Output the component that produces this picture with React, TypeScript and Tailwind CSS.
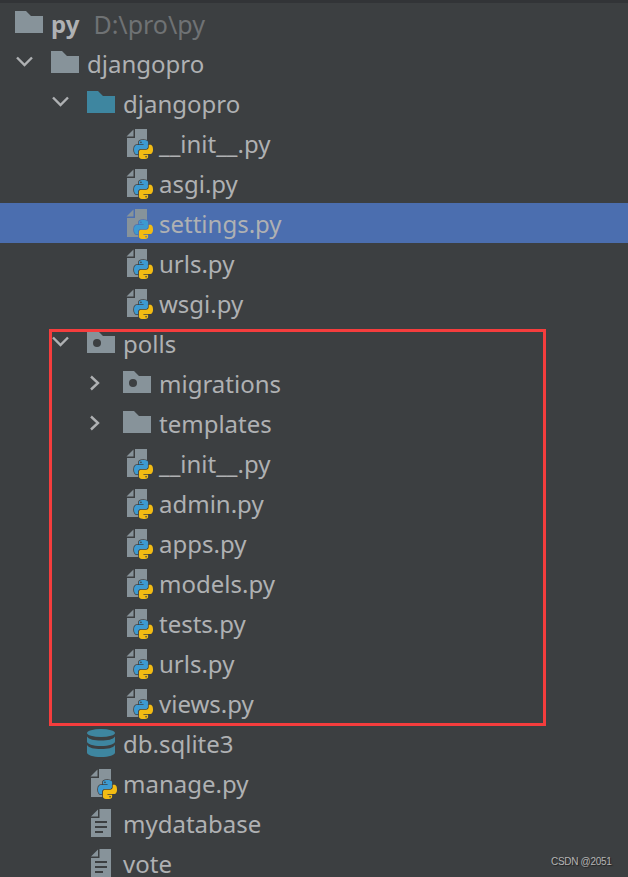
import React from "react";

const BLUE = "M54.9 0C26.8 0 28.5 12.2 28.5 12.2l.03 12.64h26.83v3.8H17.87S0 26.6 0 54.9c0 28.3 15.6 27.3 15.6 27.3h9.3V69.1s-.5-15.6 15.35-15.6h26.46s14.86.24 14.86-14.36V14.9S84.2 0 54.9 0zM40.2 8.5a4.8 4.8 0 1 1 0 9.6 4.8 4.8 0 0 1 0-9.6z";

function Chevron({ open }: { open: boolean }) {
  return (
    <svg width="36" height="40" viewBox="0 0 36 40" className="shrink-0">
      {open ? (
        <path d="M2 14.5l7.5 7.5 7.5-7.5" fill="none" stroke="#afb1b3" strokeWidth="2.4" />
      ) : (
        <path d="M4 13.5l7 6.5-7 6.5" fill="none" stroke="#afb1b3" strokeWidth="2.4" />
      )}
    </svg>
  );
}

function Folder({ color = "#87939a", dot = false, halo = "#3c3f41" }: { color?: string; dot?: boolean; halo?: string }) {
  return (
    <svg width="36" height="40" viewBox="0 0 36 40" className="shrink-0">
      <path d="M0 8h11l5 5h12v17H0z" fill={color} />
      {dot && <circle cx="10" cy="20" r="4" fill={halo} />}
    </svg>
  );
}

function PyFile({ halo = "#3c3f41" }: { halo?: string }) {
  return (
    <svg width="36" height="40" viewBox="0 0 36 40" className="shrink-0">
      <path d="M3.5 13.5l7-7v7z" fill="#87939a" />
      <path d="M12 6h12v28H4V15h8z" fill="#87939a" />
      <g transform="translate(11 17) scale(0.173)" stroke={halo} strokeWidth="9" style={{ paintOrder: "stroke" }}>
        <path d={BLUE} fill="#3d9ad1" fillRule="evenodd" />
        <path d={BLUE} fill="#f2bb13" fillRule="evenodd" transform="rotate(180 55 55)" />
      </g>
    </svg>
  );
}

function TextFile() {
  return (
    <svg width="36" height="40" viewBox="0 0 36 40" className="shrink-0">
      <path d="M4 13.5l7-7v7z" fill="#87939a" />
      <path d="M12.500 6H24v28H4V15h8.500z" fill="#87939a" />
      <path d="M8 18h12v2H8zM8 23h12v2H8zM8 28h8v2H8z" fill="#3c3f41" />
    </svg>
  );
}

function Database() {
  return (
    <svg width="36" height="40" viewBox="0 0 36 40" className="shrink-0">
      <ellipse cx="14" cy="10" rx="14" ry="4" fill="#3e86a0" />
      <path d="M0 13.500c2 3 7 4 14 4s12-1 14-4v5c0 2.500-6 4.500-14 4.500S0 21 0 18.500z" fill="#3e86a0" />
      <path d="M0 22c2 3 7 4 14 4s12-1 14-4v7.500c0 2.500-6 4.500-14 4.500S0 32 0 29.500z" fill="#3e86a0" />
    </svg>
  );
}

type Item = {
  name: string;
  depth: number;
  icon: "folder" | "teal" | "dot" | "py" | "text" | "db";
  chevron?: "open" | "closed";
  selected?: boolean;
};

const items: Item[] = [
  { name: "djangopro", depth: 1, icon: "folder", chevron: "open" },
  { name: "djangopro", depth: 2, icon: "teal", chevron: "open" },
  { name: "__init__.py", depth: 3, icon: "py" },
  { name: "asgi.py", depth: 3, icon: "py" },
  { name: "settings.py", depth: 3, icon: "py", selected: true },
  { name: "urls.py", depth: 3, icon: "py" },
  { name: "wsgi.py", depth: 3, icon: "py" },
  { name: "polls", depth: 2, icon: "dot", chevron: "open" },
  { name: "migrations", depth: 3, icon: "dot", chevron: "closed" },
  { name: "templates", depth: 3, icon: "folder", chevron: "closed" },
  { name: "__init__.py", depth: 3, icon: "py" },
  { name: "admin.py", depth: 3, icon: "py" },
  { name: "apps.py", depth: 3, icon: "py" },
  { name: "models.py", depth: 3, icon: "py" },
  { name: "tests.py", depth: 3, icon: "py" },
  { name: "urls.py", depth: 3, icon: "py" },
  { name: "views.py", depth: 3, icon: "py" },
  { name: "db.sqlite3", depth: 2, icon: "db" },
  { name: "manage.py", depth: 2, icon: "py" },
  { name: "mydatabase", depth: 2, icon: "text" },
  { name: "vote", depth: 2, icon: "text" },
];

const indent: Record<number, string> = {
  1: "pl-[15px]",
  2: "pl-[51px]",
  3: "pl-[87px]",
};

function Row({ item }: { item: Item }) {
  const halo = item.selected ? "#4b6eaf" : "#3c3f41";
  return (
    <div className={`flex h-10 shrink-0 items-center ${indent[item.depth]} ${item.selected ? "bg-[#4b6eaf]" : ""}`}>
      {item.chevron ? <Chevron open={item.chevron === "open"} /> : <div className="w-9 shrink-0" />}
      {item.icon === "folder" && <Folder />}
      {item.icon === "teal" && <Folder color="#3e86a0" />}
      {item.icon === "dot" && <Folder dot />}
      {item.icon === "py" && <PyFile halo={halo} />}
      {item.icon === "text" && <TextFile />}
      {item.icon === "db" && <Database />}
      <span className="pt-0.5 text-[24px] leading-10 whitespace-pre text-[#afb1b3]">{item.name}</span>
    </div>
  );
}

export default function App() {
  return (
    <div className="relative flex h-[877px] w-[628px] flex-col overflow-hidden bg-[#3c3f41] font-['Noto_Sans',sans-serif]">
      <div className="h-[3px] shrink-0 bg-[#323437]" />
      <div className="flex h-10 shrink-0 items-center pl-[15px]">
        <Folder />
        <span className="pt-0.5 text-[24px] leading-10 font-bold text-[#afb1b3]">py</span>
        <span className="ml-[14px] pt-0.5 text-[25px] leading-10 text-[#6f7274]">D:\pro\py</span>
      </div>
      {items.map((item, i) => (
        <Row key={i} item={item} />
      ))}
      {/* red annotation box */}
      <div className="absolute top-[329px] left-[49px] h-[397px] w-[497px] border-[3px] border-[#f53d3d]" />
      <div className="absolute top-[855px] left-[551px] font-['Liberation_Sans',sans-serif] text-[10px] tracking-[-0.3px] leading-[14px] text-[#b4b4b4] [text-shadow:1px_1px_1px_#222]">
        CSDN @2051
      </div>
    </div>
  );
}
